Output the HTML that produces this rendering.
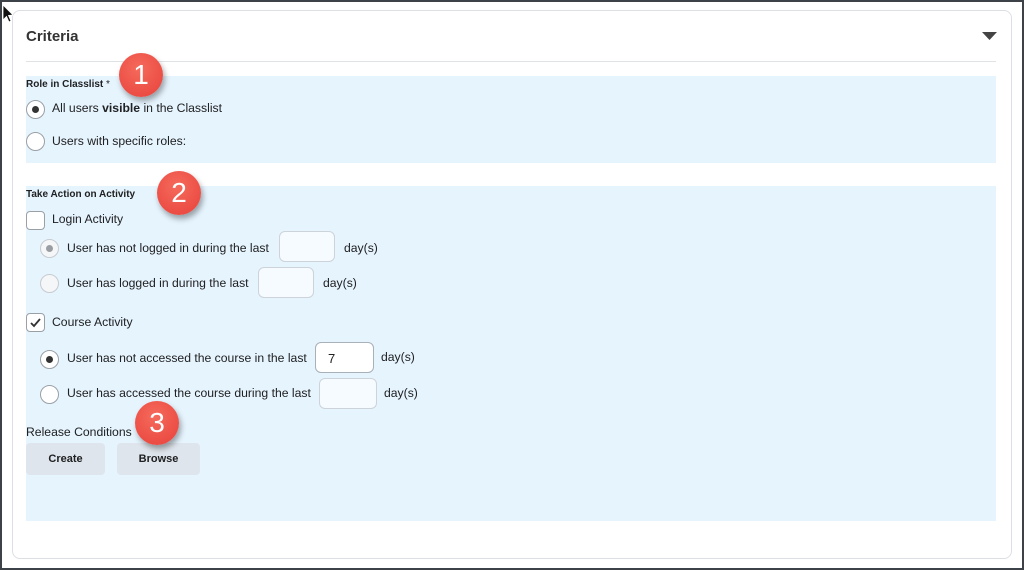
<!DOCTYPE html><html><head><style>
body{margin:0;width:1024px;height:570px;overflow:hidden;background:#fff;font-family:"Liberation Sans",sans-serif;color:#202122;position:relative}
.frame{position:absolute;left:0;top:0;width:1020px;height:566px;border:2px solid #3c4248;border-left-width:2px}
.card{position:absolute;left:12px;top:10px;width:998px;height:547px;border:1px solid #dcdfe3;border-radius:8px;background:#fff}
.a{position:absolute;white-space:nowrap}
.panel{position:absolute;left:26px;width:970px;background:#e6f4fe}
.rad{position:absolute;width:17px;height:17px;border:1px solid #9aa0a6;border-radius:50%;background:#fff}
.rad.on::after{content:"";position:absolute;left:5px;top:5px;width:7px;height:7px;border-radius:50%;background:#333}
.rad.dis{background:#f4f6f8;border-color:#c6cbd0}
.rad.dis::after{background:#9a9ea3}
.cb{position:absolute;width:17px;height:17px;border:1px solid #9aa0a6;border-radius:4px;background:#fff}
.inp{position:absolute;width:56px;height:31px;border:1px solid #cdd3d8;border-radius:6px;background:#f5fbff;font-size:13px;line-height:31px;box-sizing:border-box;padding-left:12px}
.t{font-size:12.2px}
.btn{position:absolute;top:443px;height:32px;background:#dfe5ec;border-radius:4px;font-size:11px;font-weight:bold;text-align:center;line-height:32px}
.badge{position:absolute;width:44px;height:44px;border-radius:50%;background:radial-gradient(circle at 45% 35%,#f56a5c,#e8413a);color:#fff;font-size:28px;text-align:center;line-height:44px;box-shadow:2px 4px 6px rgba(0,0,0,.35)}
</style></head><body>
<div class="frame"></div>
<div class="card"></div>
<div class="a" style="left:26px;top:28px;font-size:15px;font-weight:bold;color:#333">Criteria</div>
<svg class="a" style="left:982px;top:32px" width="15" height="9"><path d="M0 0H15L7.5 8Z" fill="#444"/></svg>
<div class="a" style="left:26px;top:61px;width:970px;height:1px;background:#e0e3e6"></div>

<div class="panel" style="top:76px;height:87px"></div>
<div class="a" style="left:26px;top:79px;font-size:10px;font-weight:bold">Role in Classlist <span style="font-weight:normal">*</span></div>
<div class="rad on" style="left:26px;top:100px"></div>
<div class="a t" style="left:52px;top:101px">All users <b>visible</b> in the Classlist</div>
<div class="rad" style="left:26px;top:132px"></div>
<div class="a t" style="left:52px;top:134px">Users with specific roles:</div>

<div class="panel" style="top:186px;height:335px"></div>
<div class="a" style="left:26px;top:189px;font-size:10px;font-weight:bold">Take Action on Activity</div>
<div class="cb" style="left:26px;top:211px"></div>
<div class="a t" style="left:52px;top:212px">Login Activity</div>
<div class="rad on dis" style="left:40px;top:239px"></div>
<div class="a t" style="left:67px;top:241px">User has not logged in during the last</div>
<div class="inp" style="left:279px;top:231px"></div>
<div class="a t" style="left:344px;top:241px">day(s)</div>
<div class="rad dis" style="left:40px;top:274px"></div>
<div class="a t" style="left:67px;top:276px">User has logged in during the last</div>
<div class="inp" style="left:258px;top:267px"></div>
<div class="a t" style="left:323px;top:276px">day(s)</div>

<div class="cb" style="left:26px;top:313px"><svg width="17" height="17"><path d="M4 9L7 12L13 5" stroke="#333" stroke-width="1.8" fill="none"/></svg></div>
<div class="a t" style="left:52px;top:315px">Course Activity</div>
<div class="rad on" style="left:40px;top:350px"></div>
<div class="a t" style="left:67px;top:351px">User has not accessed the course in the last</div>
<div class="inp" style="left:315px;top:342px;width:59px;background:#fff;border-color:#a8b0b8">7</div>
<div class="a t" style="left:381px;top:350px">day(s)</div>
<div class="rad" style="left:40px;top:385px"></div>
<div class="a t" style="left:67px;top:386px">User has accessed the course during the last</div>
<div class="inp" style="left:319px;top:378px;width:58px"></div>
<div class="a t" style="left:384px;top:386px">day(s)</div>

<div class="a t" style="left:26px;top:425px">Release Conditions</div>
<div class="btn" style="left:26px;width:79px">Create</div>
<div class="btn" style="left:117px;width:83px">Browse</div>

<div class="badge" style="left:119px;top:53px">1</div>
<div class="badge" style="left:157px;top:171px">2</div>
<div class="badge" style="left:135px;top:401px">3</div>
<svg class="a" style="left:2px;top:4px" width="12" height="20"><path d="M1 1L1 16L4.5 12.5L7 18L9 17L6.5 11.5L11 11Z" fill="#111" stroke="#fff" stroke-width=".8"/></svg>
</body></html>
